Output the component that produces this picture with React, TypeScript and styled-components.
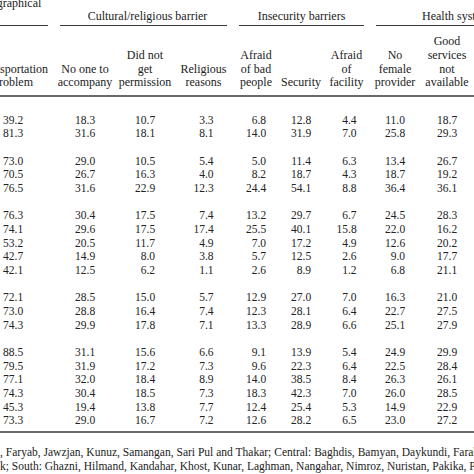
import React from "react";
import styled, { createGlobalStyle } from "styled-components";

const Global = createGlobalStyle`
  html, body {
    margin: 0;
    padding: 0;
    background: #ffffff;
    overflow: hidden;
  }
  body {
    width: 474px;
    height: 474px;
    font-family: "Liberation Serif", "Times New Roman", serif;
    color: #222222;
  }
`;

const COLS = "82px 62px 58px 59px 46px 44px 47px 50px 54px";
const LH = "13.68px";

const Page = styled.div`
  width: 474px;
  height: 474px;
  overflow: hidden;
  font-size: 12px;
  line-height: ${LH};
`;

const Table = styled.div`
  width: 502px;
  margin-left: -28px;
`;

const GroupRow = styled.div`
  display: grid;
  grid-template-columns: ${COLS};
  align-items: end;
  margin-top: -3.2px;
`;

const Group = styled.div<{ $span: number; $align?: "left" | "center" }>`
  grid-column: span ${(p) => p.$span};
  display: flex;
  flex-direction: column;
  text-align: ${(p) => p.$align ?? "center"};
  white-space: nowrap;
`;

const GroupLabel = styled.div<{ $pad?: number; $raised?: boolean; $shift?: number }>`
  padding-left: ${(p) => p.$pad ?? 0}px;
  padding-bottom: ${(p) => (p.$raised ? LH : "0px")};
  padding-right: ${(p) => p.$shift ?? 0}px;
`;

const GroupRule = styled.div<{ $right?: number }>`
  height: 1px;
  background: #3a3a3a;
  margin: 1px ${(p) => p.$right ?? 6}px 0 6px;
`;

const HeadRow = styled.div`
  display: grid;
  grid-template-columns: ${COLS};
  align-items: end;
  padding-top: 9px;
  padding-bottom: 5px;
  border-bottom: 2px solid #6a6a6a;
`;

const HeadCell = styled.div`
  text-align: center;
  white-space: nowrap;
`;

const Body = styled.div`
  padding-top: 16.6px;
  padding-bottom: 3.5px;
  border-bottom: 2px solid #6a6a6a;
  font-size: 11.5px;
`;

const DataRow = styled.div`
  display: grid;
  grid-template-columns: ${COLS};
  height: ${LH};
`;

const Cell = styled.div`
  text-align: center;
`;

const Num = styled.span`
  display: inline-block;
  width: 20px;
  text-align: right;
`;

const Note = styled.div`
  margin-top: 11.5px;
  line-height: 14px;
  font-size: 11.5px;
`;

const NoteLine = styled.div`
  width: 482px;
  text-align: justify;
  text-align-last: justify;
  white-space: nowrap;
`;

const headers: string[][] = [
  ["Transportation", "problem"],
  ["No one to", "accompany"],
  ["Did not", "get", "permission"],
  ["Religious", "reasons"],
  ["Afraid", "of bad", "people"],
  ["Security"],
  ["Afraid", "of", "facility"],
  ["No", "female", "provider"],
  ["Good", "services", "not", "available"],
];

const rows: (string[] | null)[] = [
  ["39.2", "18.3", "10.7", "3.3", "6.8", "12.8", "4.4", "11.0", "18.7"],
  ["81.3", "31.6", "18.1", "8.1", "14.0", "31.9", "7.0", "25.8", "29.3"],
  null,
  ["73.0", "29.0", "10.5", "5.4", "5.0", "11.4", "6.3", "13.4", "26.7"],
  ["70.5", "26.7", "16.3", "4.0", "8.2", "18.7", "4.3", "18.7", "19.2"],
  ["76.5", "31.6", "22.9", "12.3", "24.4", "54.1", "8.8", "36.4", "36.1"],
  null,
  ["76.3", "30.4", "17.5", "7.4", "13.2", "29.7", "6.7", "24.5", "28.3"],
  ["74.1", "29.6", "17.5", "17.4", "25.5", "40.1", "15.8", "22.0", "16.2"],
  ["53.2", "20.5", "11.7", "4.9", "7.0", "17.2", "4.9", "12.6", "20.2"],
  ["42.7", "14.9", "8.0", "3.8", "5.7", "12.5", "2.6", "9.0", "17.7"],
  ["42.1", "12.5", "6.2", "1.1", "2.6", "8.9", "1.2", "6.8", "21.1"],
  null,
  ["72.1", "28.5", "15.0", "5.7", "12.9", "27.0", "7.0", "16.3", "21.0"],
  ["73.0", "28.8", "16.4", "7.4", "12.3", "28.1", "6.4", "22.7", "27.5"],
  ["74.3", "29.9", "17.8", "7.1", "13.3", "28.9", "6.6", "25.1", "27.9"],
  null,
  ["88.5", "31.1", "15.6", "6.6", "9.1", "13.9", "5.4", "24.9", "29.9"],
  ["79.5", "31.9", "17.2", "7.3", "9.6", "22.3", "6.4", "22.5", "28.4"],
  ["77.1", "32.0", "18.4", "8.9", "14.0", "38.5", "8.4", "26.3", "26.1"],
  ["74.3", "30.4", "18.5", "7.3", "18.3", "42.3", "7.0", "26.0", "28.5"],
  ["45.3", "19.4", "13.8", "7.7", "12.4", "25.4", "5.3", "14.9", "22.9"],
  ["73.3", "29.0", "16.7", "7.2", "12.6", "28.2", "6.5", "23.0", "27.2"],
];

export default function App() {
  return (
    <Page>
      <Global />
      <Table>
        <GroupRow>
          <Group $span={1}>
            <GroupLabel $raised $shift={8}>Geographical</GroupLabel>
            <GroupRule />
          </Group>
          <Group $span={3}>
            <GroupLabel $pad={8}>Cultural/religious barrier</GroupLabel>
            <GroupRule />
          </Group>
          <Group $span={3}>
            <GroupLabel>Insecurity barriers</GroupLabel>
            <GroupRule />
          </Group>
          <Group $span={2} $align="left">
            <GroupLabel $pad={52}>Health system barriers</GroupLabel>
            <GroupRule $right={0} />
          </Group>
        </GroupRow>
        <HeadRow>
          {headers.map((lines, i) => (
            <HeadCell key={i}>
              {lines.map((l, j) => (
                <div key={j}>{l}</div>
              ))}
            </HeadCell>
          ))}
        </HeadRow>
        <Body>
          {rows.map((r, i) => (
            <DataRow key={i}>
              {r &&
                r.map((v, j) => (
                  <Cell key={j}>
                    <Num>{v}</Num>
                  </Cell>
                ))}
            </DataRow>
          ))}
        </Body>
      </Table>
      <Note>
        <NoteLine>
          , Faryab, Jawzjan, Kunuz, Samangan, Sari Pul and Thakar; Central: Baghdis, Bamyan, Daykundi, Farah,
        </NoteLine>
        <NoteLine>
          k; South: Ghazni, Hilmand, Kandahar, Khost, Kunar, Laghman, Nangahar, Nimroz, Nuristan, Pakika, Paktya,
        </NoteLine>
      </Note>
    </Page>
  );
}
